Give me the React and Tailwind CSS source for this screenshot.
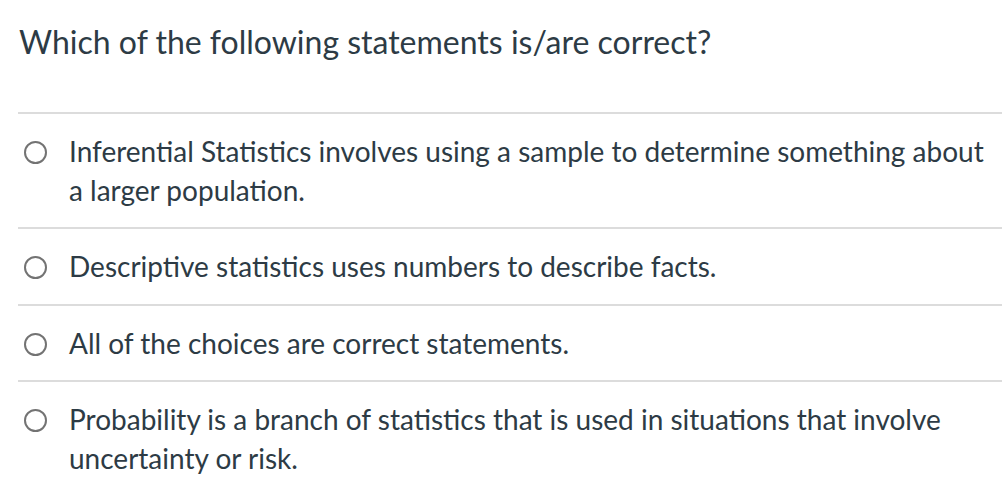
import React from 'react';

const OPTIONS = [
  'Inferential Statistics involves using a sample to determine something about a larger population.',
  'Descriptive statistics uses numbers to describe facts.',
  'All of the choices are correct statements.',
  'Probability is a branch of statistics that is used in situations that involve uncertainty or risk.',
];

function Radio() {
  return (
    <span className="mt-[9px] block h-[23px] w-[23px] shrink-0 rounded-full border-2 border-[#737373] bg-white" />
  );
}

export default function App() {
  return (
    <div
      className="min-h-[496px] bg-white pl-[18px] text-[#2d3b45]"
      style={{ fontFamily: 'Lato, "Open Sans", sans-serif' }}
    >
      <div className="pb-[51px] pl-[1px] pt-[23px] text-[32px] leading-[38px]">
        Which of the following statements is/are correct?
      </div>

      {OPTIONS.map((text) => (
        <div key={text} className="flex items-start border-t-2 border-[#dcdcdc] py-[18px]">
          <div className="w-[51px] shrink-0 pl-[6px]">
            <Radio />
          </div>
          <div className="pr-[12px] text-[28px] leading-[38.5px]">{text}</div>
        </div>
      ))}
    </div>
  );
}
